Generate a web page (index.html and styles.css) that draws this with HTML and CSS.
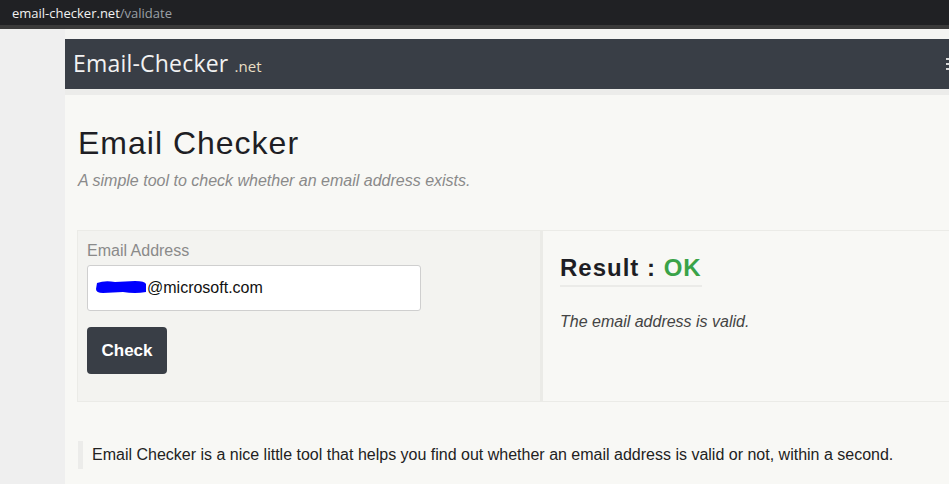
FILE: index.html
```html
<!DOCTYPE html>
<html>
<head>
<meta charset="utf-8">
<link rel="stylesheet" href="styles.css">
</head>
<body>
<div class="browserbar"><span class="host">email-checker.net</span><span class="path">/validate</span></div>
<div class="browseredge"></div>
<div class="viewport">
  <div class="page">
    <nav class="navbar">
      <div class="logo">Email-Checker <span class="tld">.net</span></div>
      <div class="burger"><span></span><span></span><span></span></div>
    </nav>
    <div class="strip"></div>
    <main class="content">
      <h1 class="title">Email Checker</h1>
      <p class="subtitle">A simple tool to check whether an email address exists.</p>
      <div class="row">
        <form class="formpanel">
          <label class="label">Email Address</label>
          <div class="input"><svg class="redact" width="52" height="14" viewBox="0 0 52 14"><path d="M2 3 Q10 0 20 2 L40 1 Q50 1 51 4 L51 12 Q40 14 28 12 L8 13 Q1 13 1 9 Z" fill="#0000ff"/></svg><span>@microsoft.com</span></div>
          <button type="button" class="btn">Check</button>
        </form>
        <section class="resultpanel">
          <h2 class="result">Result : <span class="ok">OK</span></h2>
          <p class="verdict">The email address is valid.</p>
        </section>
      </div>
      <blockquote class="quote">Email Checker is a nice little tool that helps you find out whether an email address is valid or not, within a second.</blockquote>
    </main>
  </div>
</div>
</body>
</html>
```

FILE: styles.css
```css
html, body {
  margin: 0;
  padding: 0;
  overflow: hidden;
  background: #efefef;
  font-family: "Liberation Sans", Arial, sans-serif;
}
.browserbar {
  height: 25px;
  background: #202124;
  padding-left: 12px;
  display: flex;
  align-items: center;
  font-family: "Open Sans", "Noto Sans", sans-serif;
  font-size: 13px;
}
.host { color: #f1f1f1; }
.path { color: #9aa0a6; }
.browseredge {
  height: 4px;
  background: #3a3a3a;
}
.viewport {
  display: flex;
  height: 455px;
  overflow: hidden;
}
.page {
  margin-left: 65px;
  flex: 1;
  min-width: 0;
  padding-top: 10px;
  background: #f4f4f2;
}
.navbar {
  height: 50px;
  background: #393e46;
  display: flex;
  align-items: center;
  padding-left: 8px;
  overflow: hidden;
}
.logo {
  font-family: "Open Sans", sans-serif;
  font-size: 23px;
  color: #f2f2f2;
  letter-spacing: 0.2px;
  padding-bottom: 2px;
}
.tld {
  font-size: 15px;
  color: #eadfc4;
  letter-spacing: 0;
}
.burger {
  margin-left: auto;
  margin-right: -11px;
  width: 14px;
  flex-shrink: 0;
  display: flex;
  flex-direction: column;
  gap: 3px;
}
.burger span {
  height: 2px;
  background: #d8d8d8;
}
.strip {
  height: 6px;
  background: #ececea;
}
.content {
  background: #f8f8f5;
  padding: 28px 0 0 12px;
  height: 389px;
  box-sizing: border-box;
  overflow: hidden;
}
.title {
  margin: 0 0 0 1px;
  font-size: 32px;
  font-weight: normal;
  letter-spacing: 1px;
  color: #1e1e24;
  line-height: 40px;
}
.subtitle {
  margin: 9px 0 0 1px;
  font-size: 16px;
  font-style: italic;
  color: #8a8a8a;
}
.row {
  display: flex;
  margin-top: 40px;
  height: 170px;
  border: 1px solid #ebebe7;
  border-right: none;
}
.formpanel {
  width: 453px;
  flex-shrink: 0;
  background: #f3f3f0;
  padding: 10px 0 0 9px;
  border-right: 3px solid #ebebe7;
}
.label {
  display: block;
  font-size: 16px;
  color: #8a8a8a;
  line-height: 20px;
}
.input {
  margin-top: 4px;
  width: 325px;
  height: 44px;
  background: #fff;
  border: 1px solid #cfcfcf;
  border-radius: 3px;
  display: flex;
  align-items: center;
  padding-left: 7px;
  font-size: 16px;
  color: #111;
}
.redact {
  margin-top: -2px;
}
.btn {
  display: block;
  margin-top: 16px;
  width: 80px;
  height: 47px;
  border: none;
  border-radius: 4px;
  background: #393e46;
  color: #fff;
  font-family: "Liberation Sans", Arial, sans-serif;
  font-weight: bold;
  font-size: 17px;
}
.resultpanel {
  flex: 1;
  min-width: 0;
  background: #f8f8f5;
  padding: 22px 0 0 17px;
}
.result {
  display: inline-block;
  margin: 0;
  font-size: 24px;
  letter-spacing: 1px;
  color: #1e1e24;
  line-height: 30px;
  padding-bottom: 2px;
  border-bottom: 2px solid #ebebe8;
}
.ok { color: #3aa348; }
.verdict {
  margin: 26px 0 0 0;
  font-size: 16px;
  font-style: italic;
  color: #444;
}
.quote {
  margin: 39px 0 0 1px;
  border-left: 5px solid #ececea;
  padding: 4px 0 4px 9px;
  font-size: 16px;
  color: #222;
  line-height: 20px;
}
```
